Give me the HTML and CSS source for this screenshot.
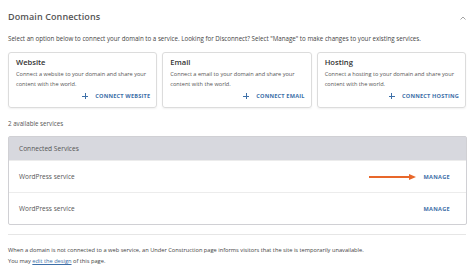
FILE: index.html
```html
<!DOCTYPE html>
<html>
<head>
<meta charset="utf-8">
<link rel="stylesheet" href="styles.css">
</head>
<body>
<div class="page">
  <div class="header">
    <h1 class="title">Domain Connections</h1>
    <svg class="chevron" width="6" height="4" viewBox="0 0 6 4"><path d="M0.5 3.5 L3 1 L5.5 3.5" fill="none" stroke="#999" stroke-width="0.9"/></svg>
  </div>
  <p class="intro">Select an option below to connect your domain to a service. Looking for Disconnect? Select "Manage" to make changes to your existing services.</p>
  <div class="cards">
    <div class="card">
      <div class="card-title">Website</div>
      <div class="card-desc">Connect a website to your domain and share your content with the world.</div>
      <div class="card-action"><span class="plus"></span>CONNECT WEBSITE</div>
    </div>
    <div class="card">
      <div class="card-title">Email</div>
      <div class="card-desc">Connect a email to your domain and share your content with the world.</div>
      <div class="card-action"><span class="plus"></span>CONNECT EMAIL</div>
    </div>
    <div class="card">
      <div class="card-title">Hosting</div>
      <div class="card-desc">Connect a hosting to your domain and share your content with the world.</div>
      <div class="card-action"><span class="plus"></span>CONNECT HOSTING</div>
    </div>
  </div>
  <p class="count">2 available services</p>
  <div class="table">
    <div class="table-head">Connected Services</div>
    <div class="row">
      <span class="row-name">WordPress service</span>
      <span class="row-right">
        <svg class="arrow" width="48" height="6" viewBox="0 0 48 6"><path d="M0 3 H42" stroke="#e8672a" stroke-width="2"/><path d="M40 0 L47 3 L40 6 Z" fill="#e8672a"/></svg>
        <span class="manage">MANAGE</span>
      </span>
    </div>
    <div class="row">
      <span class="row-name">WordPress service</span>
      <span class="row-right"><span class="manage">MANAGE</span></span>
    </div>
  </div>
  <div class="footer">
    <p>When a domain is not connected to a web service, an Under Construction page informs visitors that the site is temporarily unavailable.</p>
    <p>You may <a href="#">edit the design</a> of this page.</p>
  </div>
</div>
</body>
</html>
```

FILE: styles.css
```css
* { box-sizing: border-box; }
html, body { margin: 0; padding: 0; background: #fff; }
body { font-family: "Open Sans", "Liberation Sans", sans-serif; color: #555; }
.page { padding: 9px 8px 0 8px; width: 474px; }
.header { display: flex; justify-content: space-between; align-items: center; height: 15px; }
.title { margin: 0; font-size: 9px; font-weight: 600; color: #555; letter-spacing: 0.1px; }
.chevron { margin-top: 3px; }
.intro { margin: 10px 0 0 0; font-size: 6.2px; line-height: 10px; color: #444; }
.cards { display: grid; grid-template-columns: 1fr 1fr 1fr; gap: 5px; margin-top: 8px; width: 458px; }
.card { border: 1px solid #dcdcdc; border-radius: 3px; height: 56px; padding: 4px 6px 0 7px; box-shadow: 0 1px 2px rgba(0,0,0,0.06); display: flex; flex-direction: column; }
.card-title { font-size: 7.6px; font-weight: 600; color: #333; line-height: 11px; }
.card-desc { font-size: 5.6px; line-height: 9.5px; color: #555; margin-top: 2px; }
.card-action { align-self: flex-end; display: flex; align-items: center; font-size: 5.6px; font-weight: 700; color: #3d6fa8; letter-spacing: 0.2px; margin-top: 3px; }
.plus { position: relative; width: 6px; height: 6px; margin-right: 7px; }
.plus::before, .plus::after { content: ""; position: absolute; background: #3d6fa8; }
.plus::before { left: 0; top: 2.5px; width: 6px; height: 1px; }
.plus::after { left: 2.5px; top: 0; width: 1px; height: 6px; }
.count { margin: 11px 0 0 0; font-size: 6.2px; line-height: 10px; color: #555; }
.table { margin-top: 7px; width: 459px; border: 1px solid #d0d0d4; border-radius: 2px; }
.table-head { height: 23px; background: #d7d8de; font-size: 6.6px; color: #555; display: flex; align-items: center; padding-left: 10px; }
.row { height: 32px; display: flex; align-items: center; justify-content: space-between; padding: 0 16px 0 10px; border-top: 1px solid #ececec; }
.row-name { font-size: 6.5px; color: #555; }
.row-right { display: flex; align-items: center; }
.arrow { margin-right: 6px; }
.manage { font-size: 5.6px; font-weight: 700; color: #3d6fa8; letter-spacing: 0.3px; }
.footer { margin-top: 9px; border-top: 1px solid #e6e6e6; padding-top: 10px; width: 458px; }
.footer p { margin: 0; font-size: 5.7px; line-height: 11px; color: #444; }
.footer a { color: #3d6fa8; text-decoration: underline; }
```
